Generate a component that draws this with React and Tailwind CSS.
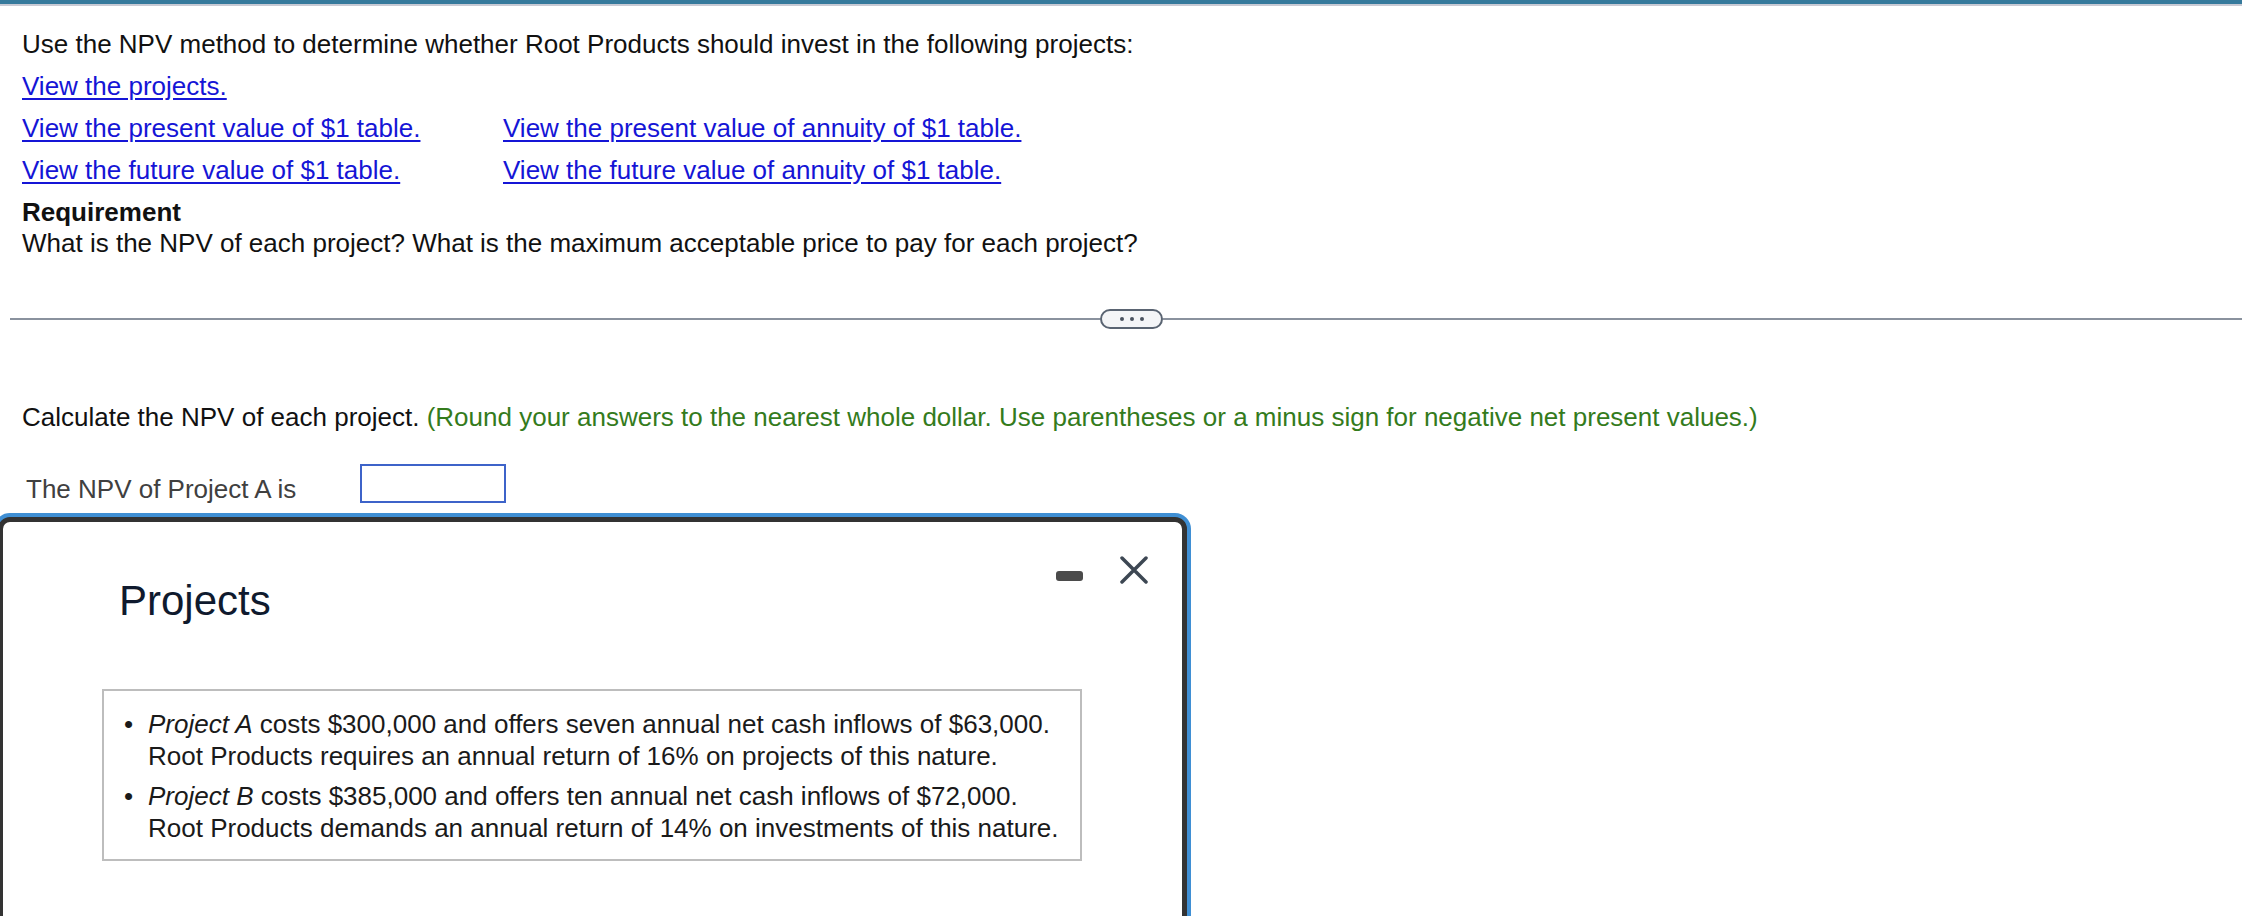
import React from 'react';

function Link({ children }) {
  return <span className="cursor-pointer text-[#1515d6] underline underline-offset-[3px]">{children}</span>;
}

function Divider() {
  return (
    <div className="ml-[10px] mt-[50px] flex items-center">
      <div className="h-[2px] w-[1090px] bg-[#8a929e]" />
      <button className="flex h-[20px] w-[63px] items-center justify-center gap-[6px] rounded-full border-2 border-[#5a6472] bg-[#f4f5f7]">
        <span className="h-[4px] w-[4px] rounded-full bg-[#4b5360]" />
        <span className="h-[4px] w-[4px] rounded-full bg-[#4b5360]" />
        <span className="h-[4px] w-[4px] rounded-full bg-[#4b5360]" />
      </button>
      <div className="h-[2px] flex-1 bg-[#8a929e]" />
    </div>
  );
}

function ProjectsWindow() {
  return (
    <div className="ml-[-2px] mt-[12px] h-[420px] w-[1189px] rounded-[12px] border-[5px] border-[#333] bg-white shadow-[0_0_0_4px_#3f8fd4]">
      <div className="flex items-start justify-between">
        <h2 className="ml-[116px] mt-[58px] text-[42px] leading-[42px] text-[#0f1a2e]">Projects</h2>
        <div className="mr-[34px] mt-[34px] flex items-start gap-[37px]">
          <button className="mt-[15px] h-[10px] w-[27px] rounded-[3px] bg-[#4b4b4b]" aria-label="minimize" />
          <button aria-label="close">
            <svg width="28" height="28" viewBox="0 0 28 28">
              <path d="M2 2 L26 26 M26 2 L2 26" stroke="#3d4753" strokeWidth="3.5" strokeLinecap="round" />
            </svg>
          </button>
        </div>
      </div>
      <div className="ml-[99px] mt-[67px] w-[980px] border-2 border-[#bdbdbd] pb-[15px] pl-[20px] pt-[17px] text-[26px] leading-[32px] text-[#1a1a1a]">
        <div className="flex">
          <span className="w-[24px] shrink-0">•</span>
          <p>
            <i>Project A</i> costs $300,000 and offers seven annual net cash inflows of $63,000.
            <br />
            Root Products requires an annual return of 16% on projects of this nature.
          </p>
        </div>
        <div className="mt-[8px] flex">
          <span className="w-[24px] shrink-0">•</span>
          <p>
            <i>Project B</i> costs $385,000 and offers ten annual net cash inflows of $72,000.
            <br />
            Root Products demands an annual return of 14% on investments of this nature.
          </p>
        </div>
      </div>
    </div>
  );
}

export default function App() {
  return (
    <div className="h-[916px] overflow-hidden bg-white font-['Liberation_Sans',Arial,sans-serif] text-[26px] leading-[32px] text-[#111]">
      <div className="h-[4px] bg-[#367a9c]" />
      <div className="h-[2px] bg-[#c8cad4]" />

      <div className="pl-[22px] pt-[22px]">
        <p>Use the NPV method to determine whether Root Products should invest in the following projects:</p>
        <p className="mt-[10px]"><Link>View the projects.</Link></p>
        <div className="mt-[10px] grid grid-cols-[481px_auto] gap-y-[10px]">
          <Link>View the present value of $1 table.</Link>
          <Link>View the present value of annuity of $1 table.</Link>
          <Link>View the future value of $1 table.</Link>
          <Link>View the future value of annuity of $1 table.</Link>
        </div>
        <p className="mt-[10px] font-bold">Requirement</p>
        <p className="leading-[31px]">What is the NPV of each project? What is the maximum acceptable price to pay for each project?</p>
      </div>

      <Divider />

      <div className="pl-[22px]">
        <p className="mt-[72px]">
          Calculate the NPV of each project.{' '}
          <span className="text-[#347b1c]">(Round your answers to the nearest whole dollar. Use parentheses or a minus sign for negative net present values.)</span>
        </p>
        <div className="mt-[31px] flex items-start">
          <span className="ml-[4px] mt-[9px] w-[334px] text-[#404040]">The NPV of Project A is</span>
          <input type="text" className="h-[39px] w-[146px] border-2 border-[#3d63c9] px-2 outline-none" />
        </div>
      </div>

      <ProjectsWindow />
    </div>
  );
}
